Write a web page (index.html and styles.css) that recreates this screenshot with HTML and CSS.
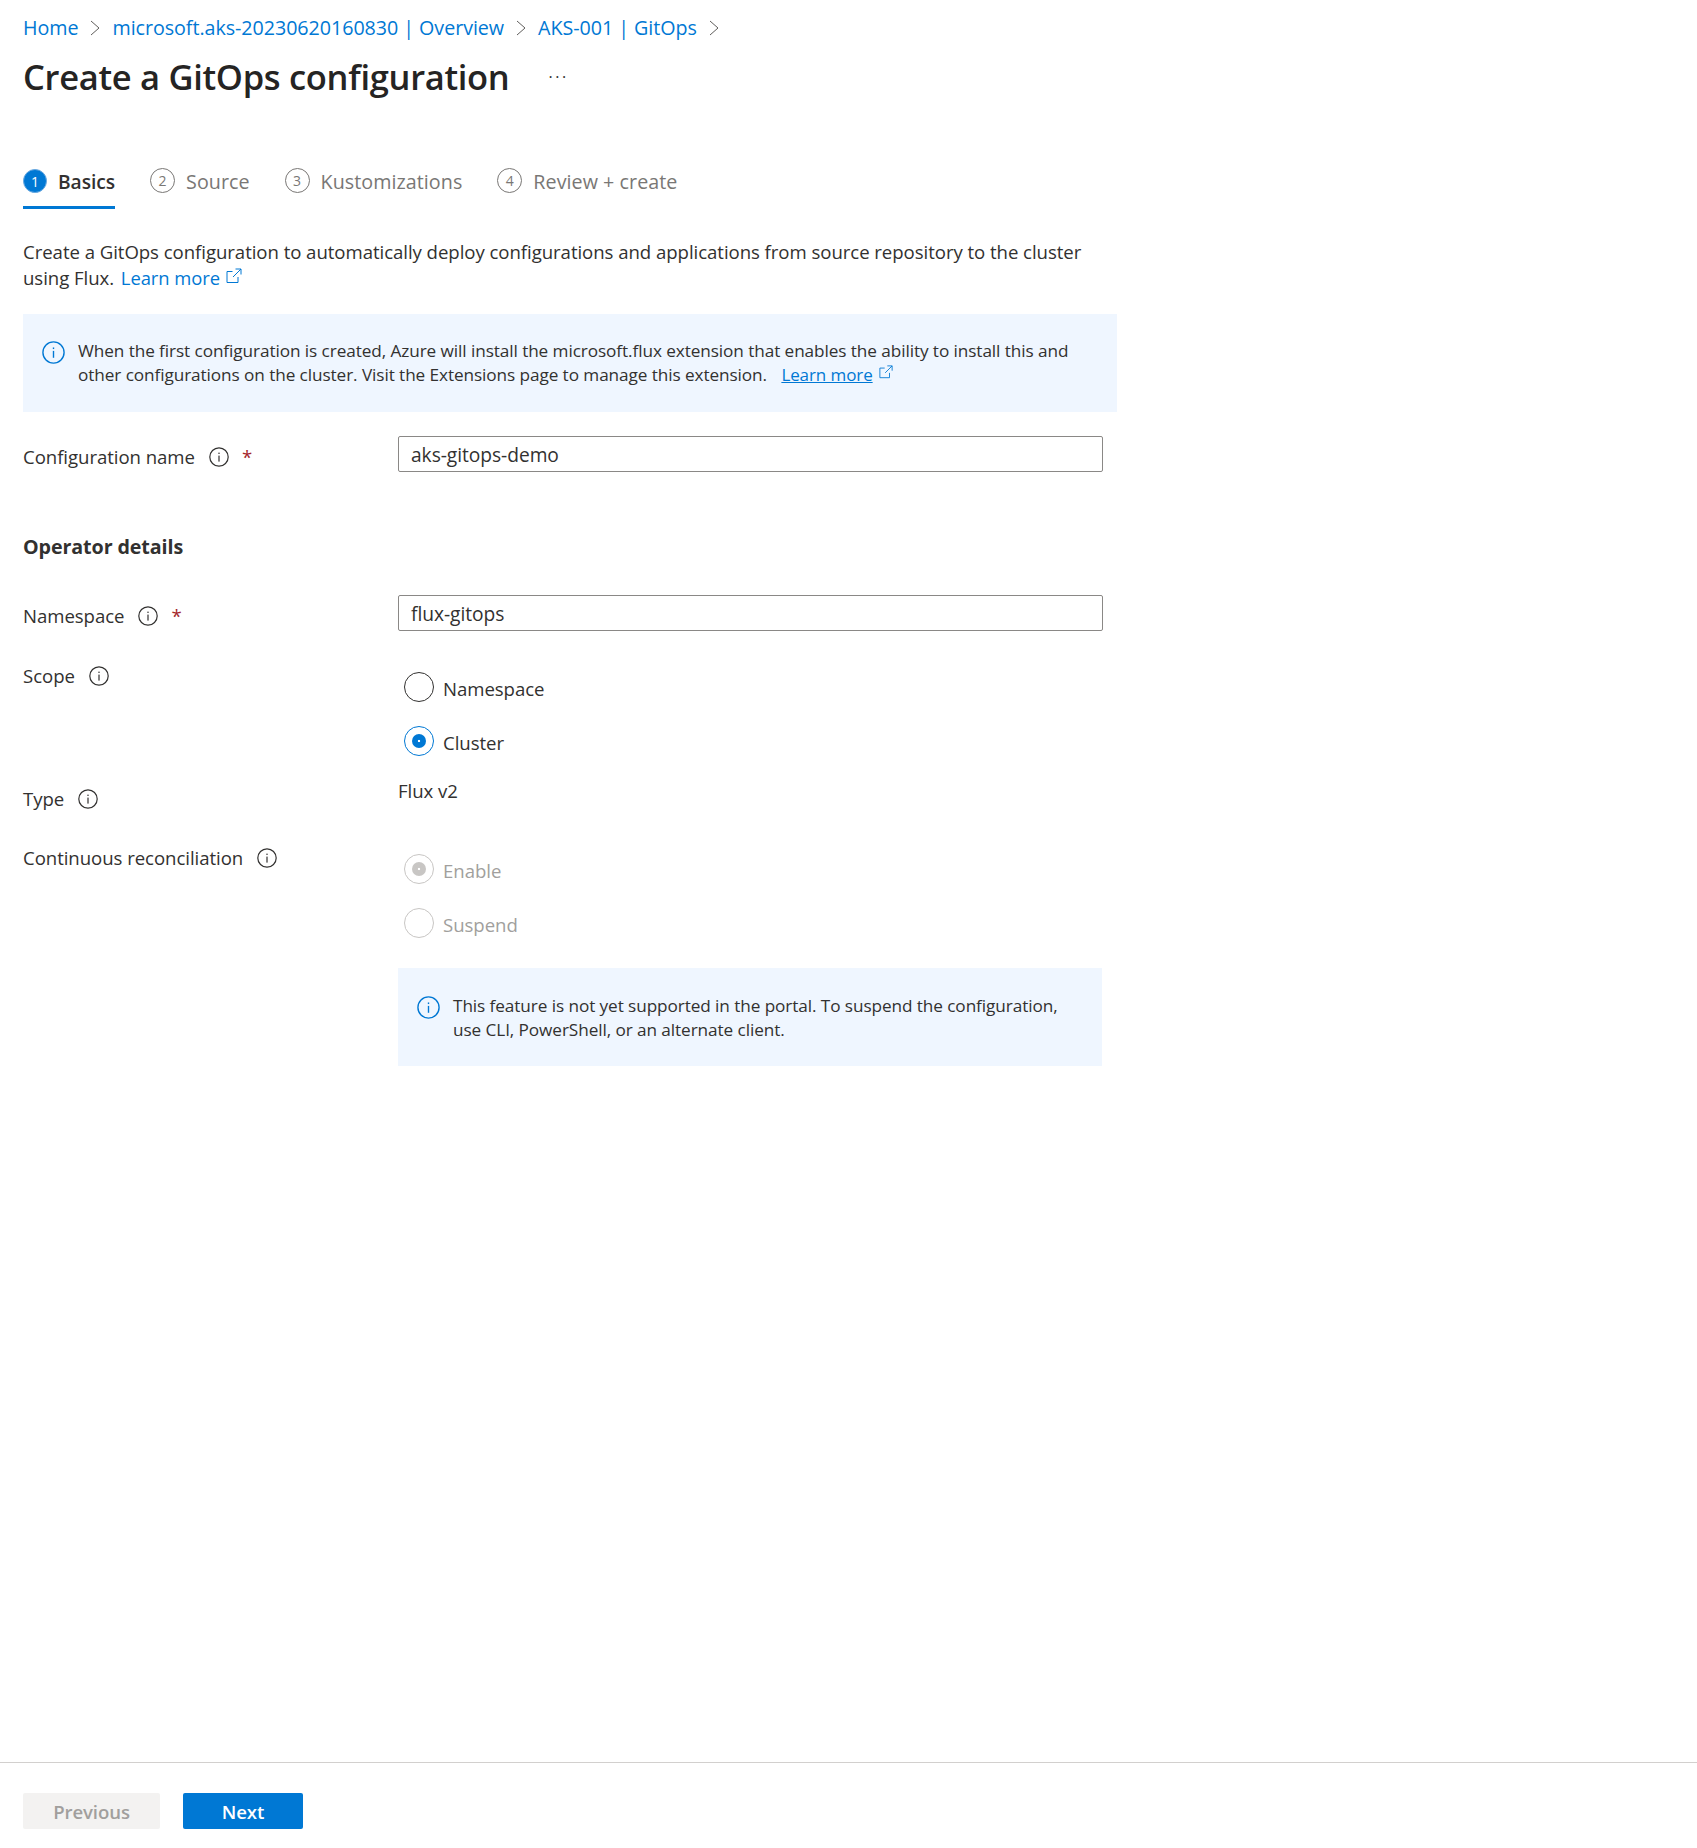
FILE: index.html
```html
<!DOCTYPE html>
<html lang="en">
<head>
<meta charset="utf-8">
<title>Create a GitOps configuration</title>
<link rel="stylesheet" href="styles.css">
</head>
<body>
<svg class="defs" aria-hidden="true">
  <symbol id="info" viewBox="0 0 20 20"><circle cx="10" cy="10" r="9.2" fill="none" stroke="currentColor" stroke-width="1.2"/><rect x="9.4" y="8.6" width="1.2" height="6" fill="currentColor"/><rect x="9.4" y="5.6" width="1.2" height="1.4" fill="currentColor"/></symbol>
  <symbol id="ext" viewBox="0 0 16 16"><path d="M6.5 3.5H1v11h11V9M9.5 1h5.5v5.5M15 1 7 9" fill="none" stroke="currentColor" stroke-width="1"/></symbol>
  <symbol id="chev" viewBox="0 0 10 16"><path d="M1 1l8 7-8 7" fill="none" stroke="currentColor" stroke-width="1"/></symbol>
</svg>
<div class="page">
  <main class="main">
    <nav class="crumbs">
      <a class="crumb">Home</a><svg class="chev"><use href="#chev"/></svg>
      <a class="crumb">microsoft.aks-20230620160830 | Overview</a><svg class="chev"><use href="#chev"/></svg>
      <a class="crumb">AKS-001 | GitOps</a><svg class="chev"><use href="#chev"/></svg>
    </nav>
    <div class="title-row">
      <h1 class="title">Create a GitOps configuration</h1>
      <span class="more">···</span>
    </div>
    <div class="tabs">
      <div class="tab active"><span class="step">1</span><span class="tab-label">Basics</span></div>
      <div class="tab"><span class="step">2</span><span class="tab-label">Source</span></div>
      <div class="tab"><span class="step">3</span><span class="tab-label">Kustomizations</span></div>
      <div class="tab"><span class="step">4</span><span class="tab-label">Review + create</span></div>
    </div>
    <p class="desc">Create a GitOps configuration to automatically deploy configurations and applications from source repository to the cluster using Flux. <a class="link">Learn more</a><svg class="ext"><use href="#ext"/></svg></p>
    <div class="notice wide">
      <svg class="notice-icon"><use href="#info"/></svg>
      <p class="notice-text">When the first configuration is created, Azure will install the microsoft.flux extension that enables the ability to install this and other configurations on the cluster. Visit the Extensions page to manage this extension. <a class="link under">Learn more</a><svg class="ext small"><use href="#ext"/></svg></p>
    </div>
    <div class="row row-name">
      <div class="label offset-input">Configuration name<svg class="i"><use href="#info"/></svg><span class="req">*</span></div>
      <div class="input">aks-gitops-demo</div>
    </div>
    <h2 class="section">Operator details</h2>
    <div class="row row-ns">
      <div class="label offset-input">Namespace<svg class="i"><use href="#info"/></svg><span class="req">*</span></div>
      <div class="input">flux-gitops</div>
    </div>
    <div class="row row-scope">
      <div class="label">Scope<svg class="i"><use href="#info"/></svg></div>
      <div class="radios scope-radios">
        <div class="radio-item"><span class="radio"></span>Namespace</div>
        <div class="radio-item"><span class="radio on"></span>Cluster</div>
      </div>
    </div>
    <div class="row row-type">
      <div class="label type-label">Type<svg class="i"><use href="#info"/></svg></div>
      <div class="value">Flux v2</div>
    </div>
    <div class="row row-cont">
      <div class="label">Continuous reconciliation<svg class="i"><use href="#info"/></svg></div>
      <div>
        <div class="radios cont-radios">
          <div class="radio-item off"><span class="radio on"></span>Enable</div>
          <div class="radio-item off"><span class="radio"></span>Suspend</div>
        </div>
        <div class="notice narrow">
          <svg class="notice-icon"><use href="#info"/></svg>
          <p class="notice-text">This feature is not yet supported in the portal. To suspend the configuration, use CLI, PowerShell, or an alternate client.</p>
        </div>
      </div>
    </div>
  </main>
  <footer class="footer">
    <button class="btn prev" type="button">Previous</button>
    <button class="btn next" type="button">Next</button>
  </footer>
</div>
</body>
</html>
```
FILE: styles.css
```css
html, body { margin: 0; padding: 0; background: #fff; }
body { font-family: "Open Sans", "Noto Sans", sans-serif; font-size: 18.6px; color: #323130; letter-spacing: -0.05px; }
.defs { position: absolute; width: 0; height: 0; }
.page { height: 1848px; display: flex; flex-direction: column; }
.main { flex: 1; padding: 16px 23px 0; }

.crumbs { display: flex; align-items: center; height: 24px; }
.crumb { color: #0078d4; line-height: 24px; font-size: 19.7px; }
.chev { width: 10px; height: 16px; margin: 0 12px; color: #605e5c; }

.title-row { display: flex; align-items: center; height: 50px; margin-top: 12px; }
.title { margin: 0; font-size: 34.5px; font-weight: 600; letter-spacing: -0.3px; color: #252423; line-height: 50px; }
.more { margin-left: 39px; font-size: 16px; letter-spacing: 2.6px; color: #323130; }

.tabs { display: flex; gap: 35px; height: 49px; margin-top: 58px; }
.tab { display: flex; align-items: center; gap: 11px; height: 46px; color: #797775; font-size: 19.7px; letter-spacing: 0.05px; }
.tab-label { margin-top: -4px; }
.tab.active { color: #323130; font-weight: 600; height: 46px; border-bottom: 3px solid #0078d4; font-size: 19.2px; letter-spacing: -0.05px; }
.step { box-sizing: border-box; width: 25px; height: 25px; border: 1px solid #797775; border-radius: 50%; display: flex; align-items: center; justify-content: center; font-size: 14px; font-weight: 400; margin-top: -6px; }
.tab.active .step { width: 24px; height: 24px; background: #0078d4; border-color: #6aa9e0; color: #fff; margin-top: -4px; }

.desc { margin: 30px 0 0; width: 1090px; line-height: 26px; }
.link { color: #0078d4; margin-left: 2px; font-size: 18.4px; }
.link.under { text-decoration: underline; margin-left: 10px; font-size: 17px; }
.ext { width: 16px; height: 16px; margin-left: 6px; color: #0078d4; vertical-align: 1px; }
.ext.small { width: 14px; height: 14px; vertical-align: 2px; }

.notice { box-sizing: border-box; display: flex; background: #eff6ff; height: 98px; }
.notice.wide { margin-top: 23px; width: 1094px; padding: 25px 40px 0 19px; }
.notice.narrow { margin-top: 28.5px; width: 704px; padding: 26px 40px 0 19px; }
.notice-icon { flex: none; width: 23px; height: 23px; margin: 2px 13px 0 0; color: #0078d4; }
.notice-text { margin: 0; font-size: 17.2px; line-height: 24px; letter-spacing: -0.085px; }

.row { display: grid; grid-template-columns: 375px 705px; }
.row-name { margin-top: 24px; }
.row-ns { margin-top: 33px; }
.row-scope { margin-top: 32px; }
.row-type { margin-top: 20.5px; }
.row-cont { margin-top: 33px; }

.label { display: flex; align-items: center; height: 26px; line-height: 26px; }
.offset-input { margin-top: 8px; }
.type-label { margin-top: 8px; }
.i { width: 20px; height: 20px; margin-left: 14px; color: #323130; }
.req { color: #a4262c; margin-left: 13px; }

.input { box-sizing: border-box; height: 36px; border: 1px solid #8a8886; border-radius: 2px; padding: 0 12px; line-height: 35px; font-size: 19.2px; }
.value { line-height: 26px; }

.section { margin: 61px 0 0; height: 29px; font-size: 19.7px; font-weight: 700; line-height: 28px; color: #323130; letter-spacing: -0.1px; }

.radios { display: flex; flex-direction: column; gap: 24px; padding-left: 6px; }
.scope-radios { padding-top: 10.5px; }
.cont-radios { padding-top: 10.5px; }
.radio-item { display: flex; align-items: center; gap: 9px; height: 30px; line-height: 30px; }
.radio-item.off { color: #a19f9d; }
.radio { box-sizing: border-box; flex: none; position: relative; width: 30px; height: 30px; margin-top: -3px; border: 1px solid #323130; border-radius: 50%; }
.radio.on { border-color: #0078d4; }
.radio.on::after { content: ""; position: absolute; left: 7px; top: 7px; width: 14px; height: 14px; border-radius: 50%; background: radial-gradient(circle, #fff 0, #fff 1px, #0078d4 1.6px); }
.off .radio { border-color: #c8c6c4; }
.off .radio.on::after { background: radial-gradient(circle, #fff 0, #fff 1px, #c8c6c4 1.6px); }

.footer { box-sizing: border-box; height: 86px; border-top: 1px solid #d2d0ce; padding: 30px 23px 0; display: flex; gap: 23px; }
.btn { height: 36px; border: 0; border-radius: 2px; font: 600 18.6px "Open Sans", "Noto Sans", sans-serif; padding: 0; letter-spacing: -0.1px; }
.prev { width: 137px; background: #f3f2f1; color: #a19f9d; }
.next { width: 120px; background: #0078d4; color: #fff; }
```
